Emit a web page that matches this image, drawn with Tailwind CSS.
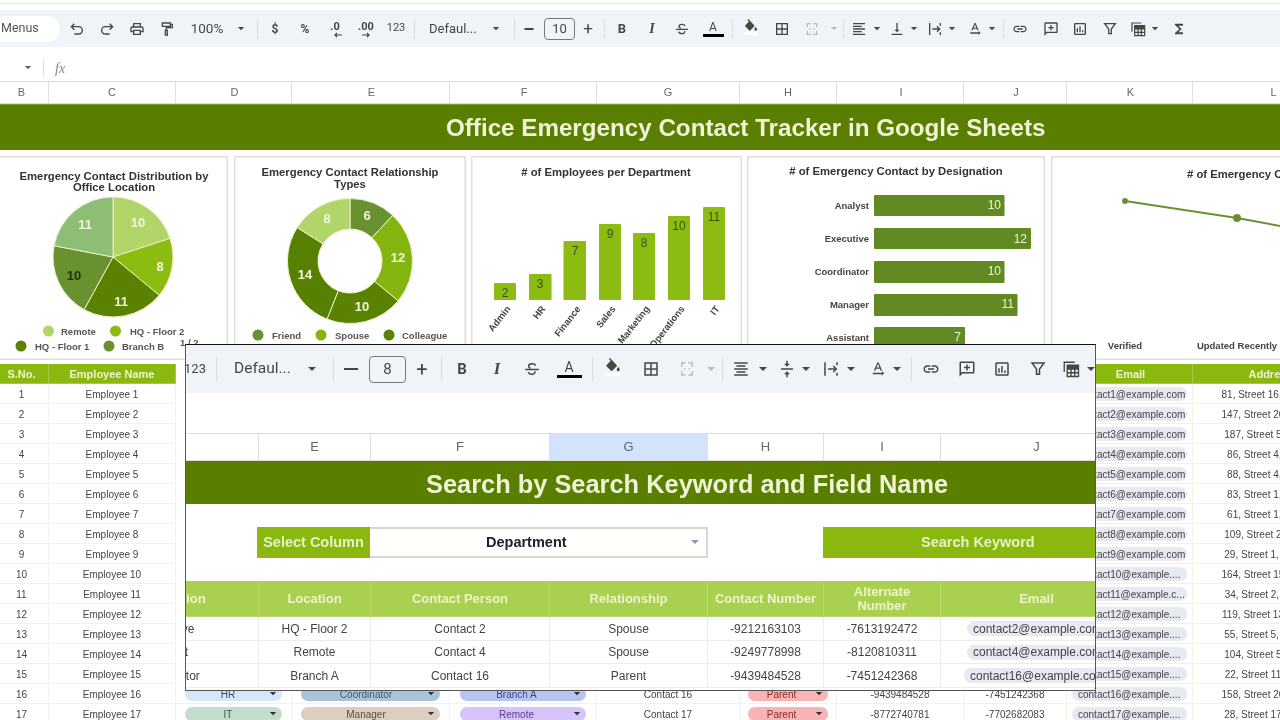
<!doctype html>
<html><head><meta charset="utf-8"><script src="https://cdn.jsdelivr.net/npm/@tailwindcss/browser@4"></script></head>
<body class="bg-white">
<svg class="hidden">
<symbol id="undo" viewBox="0 0 24 24"><path d="M8 4 3.5 8.5 8 13M4 8.5h10.5a5.5 5.5 0 0 1 0 11H8" fill="none" stroke="currentColor" stroke-width="2"/></symbol>
<symbol id="redo" viewBox="0 0 24 24"><path d="M16 4l4.500 4.500L16 13M20 8.500H9.500a5.500 5.500 0 0 0 0 11H16" fill="none" stroke="currentColor" stroke-width="2"/></symbol>
<symbol id="print" viewBox="0 0 24 24"><path fill="currentColor" d="M19 8h-1V3H6v5H5c-1.660 0-3 1.340-3 3v6h4v4h12v-4h4v-6c0-1.660-1.340-3-3-3zM8 5h8v3H8V5zm8 12v2H8v-4h8v2zm2-2v-2H6v2H4v-4c0-.55.45-1 1-1h14c.55 0 1 .45 1 1v4h-2z"/></symbol>
<symbol id="paint" viewBox="0 0 24 24"><path d="M5 3h12v5H5zM17 5h3v5H11v4M9.500 14h3v7h-3z" fill="none" stroke="currentColor" stroke-width="2"/></symbol>
<symbol id="strike" viewBox="0 0 24 24"><path d="M16.500 7.500C16 5.500 14 5 12 5c-2.500 0-4.500 1-4.500 3 0 1.500 1 2.500 2.500 3M3 12.500h18M16 15c.5 2.500-1.500 4-4 4-2.500 0-4.500-1-4.800-3" fill="none" stroke="currentColor" stroke-width="2"/></symbol>
<symbol id="fill" viewBox="0 0 24 24"><path fill="currentColor" d="M8 0 6.600 1.400l2.400 2.400-5.400 5.400c-.6.6-.6 1.500 0 2.100l5.500 5.500c.6.6 1.500.6 2.100 0l5.500-5.500c.6-.6.6-1.500 0-2.100zM19 12s-2 2.200-2 3.500c0 1.100.9 2 2 2s2-.9 2-2c0-1.300-2-3.500-2-3.500z"/><rect x="1" y="20" width="22" height="4" fill="#fff"/></symbol>
<symbol id="borders" viewBox="0 0 24 24"><path fill="currentColor" d="M3 3v18h18V3H3zm8 16H5v-6h6v6zm0-8H5V5h6v6zm8 8h-6v-6h6v6zm0-8h-6V5h6v6z"/></symbol>
<symbol id="merge" viewBox="0 0 24 24"><path d="M5 9V4h5M14 4h5v5M19 15v5h-5M10 20H5v-5M8 12h2M14 12h2" fill="none" stroke="#b9bdc2" stroke-width="2"/></symbol>
<symbol id="alignl" viewBox="0 0 24 24"><path fill="currentColor" d="M3 3h18v2H3zM3 7h13v2H3zM3 11h18v2H3zM3 15h13v2H3zM3 19h18v2H3z"/></symbol>
<symbol id="alignc" viewBox="0 0 24 24"><path fill="currentColor" d="M3 3h18v2H3zM6 7h12v2H6zM3 11h18v2H3zM6 15h12v2H6zM3 19h18v2H3z"/></symbol>
<symbol id="vbottom" viewBox="0 0 24 24"><path fill="currentColor" d="M16 13h-3V3h-2v10H8l4 4 4-4zM4 19v2h16v-2H4z"/></symbol>
<symbol id="vmid" viewBox="0 0 24 24"><path fill="currentColor" d="M8 19h3v4h2v-4h3l-4-4-4 4zm8-14h-3V1h-2v4H8l4 4 4-4zM4 11v2h16v-2H4z"/></symbol>
<symbol id="wrap" viewBox="0 0 24 24"><path d="M4 3v18M20 3v4M20 17v4M8 12h11M15 8l4 4-4 4" fill="none" stroke="currentColor" stroke-width="2"/></symbol>
<symbol id="rotate" viewBox="0 0 24 24"><path fill="currentColor" d="M12.750 3h-1.500L6.500 14h2.100l.9-2.200h5l.9 2.200h2.100L12.750 3zm-2.620 7L12 4.980 13.870 10h-3.740zm10.370 8-3-3v2H5v2h12v2l3-3z"/></symbol>
<symbol id="link" viewBox="0 0 24 24"><path fill="currentColor" d="M3.900 12c0-1.710 1.390-3.100 3.100-3.100h4V7H7c-2.760 0-5 2.240-5 5s2.240 5 5 5h4v-1.900H7c-1.710 0-3.100-1.390-3.100-3.100zM8 13h8v-2H8v2zm9-6h-4v1.900h4c1.710 0 3.100 1.390 3.100 3.100s-1.390 3.100-3.100 3.100h-4V17h4c2.760 0 5-2.240 5-5s-2.240-5-5-5z"/></symbol>
<symbol id="comment" viewBox="0 0 24 24"><path fill="currentColor" d="M20 2H4c-1.100 0-2 .9-2 2v18l4-4h14c1.100 0 2-.9 2-2V4c0-1.100-.9-2-2-2zm0 14H5.170L4 17.170V4h16v12zM13 6h-2v3H8v2h3v3h2v-3h3V9h-3z"/></symbol>
<symbol id="chart" viewBox="0 0 24 24"><path fill="currentColor" d="M19 3H5c-1.100 0-2 .9-2 2v14c0 1.100.9 2 2 2h14c1.100 0 2-.9 2-2V5c0-1.100-.9-2-2-2zm0 16H5V5h14v14zM7 11h2v6H7zM11 8h2v9h-2zM15 14h2v3h-2z"/></symbol>
<symbol id="filter" viewBox="0 0 24 24"><path d="M4 4h16l-6 8v7h-4v-7z" fill="none" stroke="currentColor" stroke-width="2"/></symbol>
<symbol id="calc" viewBox="0 0 24 24"><path d="M3 16V3h14" fill="none" stroke="currentColor" stroke-width="1.800"/><path d="M7 7h15v15H7zM7 12h15M7 17h15M12 12v10M17 12v10" fill="none" stroke="currentColor" stroke-width="1.800"/><path fill="currentColor" d="M7 7h15v5H7z"/></symbol>
<symbol id="sigma" viewBox="0 0 24 24"><path fill="currentColor" d="M18 4H6v2l6.500 6L6 18v2h12v-3h-7l5-5-5-5h7z"/></symbol>
<symbol id="drop" viewBox="-1 0 10 5"><path fill="currentColor" d="M0 0h8L4 4z"/></symbol>
</svg>

<div class="relative w-[1280px] h-[720px] overflow-hidden bg-white text-[#444] font-['Liberation_Sans',Arial,sans-serif] blur-[0.35px]">

<!-- top strip -->
<div class="h-[10px] bg-white"><div class="h-[3px]"></div><div class="h-[1px] bg-[#e6e6e6]"></div></div>

<!-- main toolbar -->
<div class="h-[37px] bg-[#f0f4f9] flex items-center text-[#444746] font-[Roboto,sans-serif] [&>*]:shrink-0">
  <div class="w-[60px] h-[26px] bg-white rounded-r-full flex items-center text-[12.500px] text-[#555] pl-[1px]">Menus</div>
  <svg class="ml-[9px] w-4 h-4"><use href="#undo"/></svg>
  <svg class="ml-[14px] w-4 h-4"><use href="#redo"/></svg>
  <svg class="ml-[14px] w-4 h-4"><use href="#print"/></svg>
  <svg class="ml-[14px] w-4 h-4"><use href="#paint"/></svg>
  <div class="ml-[12px] w-[40px] text-center text-[13.500px]">100%</div>
  <svg class="ml-[10px] w-[8px] h-[4px]"><use href="#drop"/></svg>
  <div class="ml-[12px] w-[1px] h-[20px] bg-[#d8dce2]"></div>
  <div class="ml-[9px] w-4 text-center text-[12px] font-bold">$</div>
  <div class="ml-[14px] w-4 text-center text-[12px] font-bold">%</div>
  <div class="ml-[14px] w-4 relative text-center text-[11px] font-bold leading-[12px] -mt-[4px]">.0<svg class="absolute left-[6px] top-[11px] w-[9px] h-[6px]" viewBox="0 0 9 6"><path d="M9 3H2M4 1 2 3l2 2" fill="none" stroke="currentColor" stroke-width="1.200"/></svg></div>
  <div class="ml-[15px] w-4 relative text-center text-[11px] font-bold leading-[12px] -mt-[4px]">.00<svg class="absolute left-[4px] top-[11px] w-[9px] h-[6px]" viewBox="0 0 9 6"><path d="M0 3h7M5 1l2 2-2 2" fill="none" stroke="currentColor" stroke-width="1.200"/></svg></div>
  <div class="ml-[12px] w-[20px] text-center text-[11px]">123</div>
  <div class="ml-[8px] w-[1px] h-[20px] bg-[#d8dce2]"></div>
  <div class="ml-[14px] w-[52px] text-[13px] whitespace-nowrap">Defaul...</div>
  <svg class="ml-[11px] w-[8px] h-[4px]"><use href="#drop"/></svg>
  <div class="ml-[14px] w-[1px] h-[20px] bg-[#d8dce2]"></div>
  <div class="ml-[8px] w-[12px] h-[2px] bg-[#444746] scale-x-75"></div>
  <div class="ml-[9px] w-[31px] h-[22px] border border-[#777] rounded-[4px] flex items-center justify-center text-[13px]">10</div>
  <div class="ml-[7px] w-[12px] text-center text-[17px] leading-none">+</div>
  <div class="ml-[10px] w-[1px] h-[20px] bg-[#d8dce2]"></div>
  <div class="ml-[9px] w-4 text-center text-[13px] font-bold">B</div>
  <div class="ml-[14px] w-4 text-center text-[14px] font-bold italic font-['Liberation_Serif',serif]">I</div>
  <svg class="ml-[14px] w-4 h-4"><use href="#strike"/></svg>
  <div class="ml-[15px] w-4 flex flex-col items-center"><span class="text-[12px] leading-[13px]">A</span><span class="w-[21px] h-[3px] bg-black shrink-0"></span></div>
  <div class="ml-[11px] w-[1px] h-[20px] bg-[#d8dce2]"></div>
  <svg class="ml-[10px] w-4 h-4 -mt-[3px]"><use href="#fill"/></svg>
  <svg class="ml-[15px] w-4 h-4"><use href="#borders"/></svg>
  <svg class="ml-[14px] w-4 h-4"><use href="#merge"/></svg>
  <svg class="ml-[10px] w-[8px] h-[4px] text-[#b9bdc2]"><use href="#drop"/></svg>
  <div class="ml-[5px] w-[1px] h-[20px] bg-[#d8dce2]"></div>
  <svg class="ml-[7px] w-4 h-4"><use href="#alignl"/></svg>
  <svg class="ml-[6px] w-[8px] h-[4px]"><use href="#drop"/></svg>
  <svg class="ml-[8px] w-4 h-4"><use href="#vbottom"/></svg>
  <svg class="ml-[5px] w-[8px] h-[4px]"><use href="#drop"/></svg>
  <svg class="ml-[9px] w-4 h-4"><use href="#wrap"/></svg>
  <svg class="ml-[5px] w-[8px] h-[4px]"><use href="#drop"/></svg>
  <svg class="ml-[11px] w-4 h-4"><use href="#rotate"/></svg>
  <svg class="ml-[5px] w-[8px] h-[4px]"><use href="#drop"/></svg>
  <div class="ml-[7px] w-[1px] h-[20px] bg-[#d8dce2]"></div>
  <svg class="ml-[8px] w-4 h-4"><use href="#link"/></svg>
  <svg class="ml-[15px] w-4 h-4"><use href="#comment"/></svg>
  <svg class="ml-[13px] w-4 h-4"><use href="#chart"/></svg>
  <svg class="ml-[14px] w-4 h-4"><use href="#filter"/></svg>
  <svg class="ml-[12px] w-4 h-4"><use href="#calc"/></svg>
  <svg class="ml-[5px] w-[8px] h-[4px]"><use href="#drop"/></svg>
  <svg class="ml-[12px] w-4 h-4"><use href="#sigma"/></svg>
</div>

<!-- formula bar -->
<div class="h-[34px] bg-white flex items-center pt-[8px] text-[#666]">
  <svg class="ml-[24px] w-[8px] h-[4px]"><use href="#drop"/></svg>
  <div class="ml-[11px] w-[1px] h-[18px] bg-[#ddd]"></div>
  <div class="ml-[11px] text-[14px] italic font-['Liberation_Serif',serif] text-[#888]">fx</div>
</div>

<!-- column letters -->
<div class="ml-[-5px] w-[1379px] h-[23px] border-t border-b border-[#dcdcdc] grid grid-cols-[54px_127px_116px_158px_147px_143px_97px_127px_103px_126px_156px] text-[11px] text-[#666] [&>*]:flex [&>*]:items-center [&>*]:justify-center [&>*]:border-r [&>*]:border-[#dfdfdf]">
  <div>B</div><div>C</div><div class="pl-[2px]">D</div><div class="pl-[2px]">E</div><div class="pl-[2px]">F</div><div>G</div><div>H</div><div class="pl-[2px]">I</div><div class="pl-[2px]">J</div><div class="pl-[2px]">K</div><div class="pl-[6px]">L</div>
</div>

<!-- title -->
<div class="h-[46px] bg-[#5a7f00] border-t border-[#7d9a33] flex items-center pl-[446px] pt-[2px] text-[24.200px] font-bold text-[#eef5d6] whitespace-nowrap">Office Emergency Contact Tracker in Google Sheets</div>

<!-- charts -->
<div class="mt-[6px] h-[204px] flex items-start">
  <div class="ml-[-2px] w-[230px] h-[204px] shrink-0 shadow-[inset_0_0_0_1.500px_#dde0dd]">
    <svg width="230" height="204" viewBox="-2 156 230 204" font-family="Liberation Sans, Arial, sans-serif">
      <g font-size="11.300" font-weight="bold" fill="#333" text-anchor="middle"><text x="114" y="180">Emergency Contact Distribution by</text><text x="114" y="191">Office Location</text></g>
      <g stroke="#e8f2c4" stroke-width="1">
        <path fill="#b2d56a" d="M113 257V197A60 60 0 0 1 170.060 238.460Z"/>
        <path fill="#8cbb12" d="M113 257L170.060 238.460A60 60 0 0 1 159.230 295.240Z"/>
        <path fill="#5a8200" d="M113 257L159.230 295.240A60 60 0 0 1 84.090 309.580Z"/>
        <path fill="#6a9130" d="M113 257L84.090 309.580A60 60 0 0 1 54.060 245.760Z"/>
        <path fill="#8ebe75" d="M113 257L54.060 245.760A60 60 0 0 1 113 197Z"/>
      </g>
      <g font-size="13" font-weight="bold" text-anchor="middle" fill="#f1f7dc">
        <text x="138" y="227">10</text><text x="160" y="271">8</text><text x="121" y="306">11</text><text x="74" y="280" fill="#1f3300">10</text><text x="85" y="229">11</text>
      </g>
      <g font-size="9.500" font-weight="bold" fill="#555">
        <circle cx="48.500" cy="331" r="5.500" fill="#b2d56a"/><text x="61" y="334.500">Remote</text>
        <circle cx="115.500" cy="331" r="5.500" fill="#8cbb12"/><text x="130" y="334.500">HQ - Floor 2</text>
        <circle cx="21" cy="346" r="5.500" fill="#5a8200"/><text x="35" y="349.500">HQ - Floor 1</text>
        <circle cx="109" cy="346" r="5.500" fill="#6a9130"/><text x="122" y="349.500">Branch B</text>
        <text x="180" y="346">1 / 2</text>
      </g>
    </svg>
  </div>
  <div class="ml-[6px] w-[232px] h-[204px] shrink-0 shadow-[inset_0_0_0_1.500px_#dde0dd]">
    <svg width="232" height="204" viewBox="234 156 232 204" font-family="Liberation Sans, Arial, sans-serif">
      <g font-size="11.300" font-weight="bold" fill="#333" text-anchor="middle"><text x="350" y="176">Emergency Contact Relationship</text><text x="350" y="188">Types</text></g>
      <g stroke="#e8f2c4" stroke-width="1">
        <path fill="#6a9130" d="M350 198.500A62.500 62.500 0 0 1 392.780 215.440L371.900 237.670A32 32 0 0 0 350 229Z"/>
        <path fill="#84b40e" d="M392.780 215.440A62.500 62.500 0 0 1 398.160 300.840L374.660 281.400A32 32 0 0 0 371.900 237.670Z"/>
        <path fill="#5a8200" d="M398.160 300.840A62.500 62.500 0 0 1 326.990 319.110L338.220 290.750A32 32 0 0 0 374.660 281.400Z"/>
        <path fill="#578000" d="M326.990 319.110A62.500 62.500 0 0 1 297.230 227.510L322.980 243.850A32 32 0 0 0 338.220 290.750Z"/>
        <path fill="#b2d56a" d="M297.230 227.510A62.500 62.500 0 0 1 350 198.500L350 229A32 32 0 0 0 322.980 243.850Z"/>
      </g>
      <g font-size="13" font-weight="bold" text-anchor="middle" fill="#f1f7dc">
        <text x="367" y="220">6</text><text x="398" y="262">12</text><text x="362" y="311">10</text><text x="305" y="279">14</text><text x="327" y="223">8</text>
      </g>
      <g font-size="9.500" font-weight="bold" fill="#555">
        <circle cx="258" cy="335" r="5.500" fill="#6a9130"/><text x="272" y="338.500">Friend</text>
        <circle cx="321" cy="335" r="5.500" fill="#84b40e"/><text x="335" y="338.500">Spouse</text>
        <circle cx="389" cy="335" r="5.500" fill="#5a8200"/><text x="402" y="338.500">Colleague</text>
      </g>
    </svg>
  </div>
  <div class="ml-[5px] w-[271px] h-[204px] shrink-0 shadow-[inset_0_0_0_1.500px_#dde0dd]">
    <svg width="271" height="204" viewBox="471 156 271 204" font-family="Liberation Sans, Arial, sans-serif">
      <text x="606" y="176" font-size="11.300" font-weight="bold" fill="#333" text-anchor="middle"># of Employees per Department</text>
      <g fill="#8cbb12">
        <rect x="494" y="283" width="22" height="17" rx="1"/><rect x="529" y="274" width="22.500" height="26" rx="1"/><rect x="563.500" y="241" width="22.500" height="59" rx="1"/><rect x="599" y="224" width="22" height="76" rx="1"/><rect x="633" y="233" width="22" height="67" rx="1"/><rect x="668" y="216" width="22" height="84" rx="1"/><rect x="703" y="207" width="22" height="93" rx="1"/>
      </g>
      <g font-size="12" fill="#37520a" text-anchor="middle">
        <text x="505" y="297">2</text><text x="540" y="288">3</text><text x="575" y="255">7</text><text x="610" y="238">9</text><text x="644" y="247">8</text><text x="679" y="230">10</text><text x="714" y="221">11</text>
      </g>
      <g font-size="9.500" font-weight="bold" fill="#444" text-anchor="end">
        <text transform="translate(511 309) rotate(-52)">Admin</text><text transform="translate(546 309) rotate(-52)">HR</text><text transform="translate(581 309) rotate(-52)">Finance</text><text transform="translate(616 309) rotate(-52)">Sales</text><text transform="translate(650 309) rotate(-52)">Marketing</text><text transform="translate(685 309) rotate(-52)">Operations</text><text transform="translate(720 309) rotate(-52)">IT</text>
      </g>
    </svg>
  </div>
  <div class="ml-[5px] w-[298px] h-[204px] shrink-0 shadow-[inset_0_0_0_1.500px_#dde0dd]">
    <svg width="298" height="204" viewBox="747 156 298 204" font-family="Liberation Sans, Arial, sans-serif">
      <text x="896" y="175" font-size="11.300" font-weight="bold" fill="#333" text-anchor="middle"># of Emergency Contact by Designation</text>
      <g fill="#618a22">
        <rect x="874" y="195" width="130.500" height="21" rx="1"/><rect x="874" y="228" width="157" height="21" rx="1"/><rect x="874" y="261" width="130.500" height="22" rx="1"/><rect x="874" y="294" width="143.500" height="22" rx="1"/><rect x="874" y="327" width="91" height="21" rx="1"/>
      </g>
      <g font-size="12" fill="#eef5d6" text-anchor="end">
        <text x="1001" y="209">10</text><text x="1027" y="243">12</text><text x="1001" y="275">10</text><text x="1014" y="308">11</text><text x="961" y="341">7</text>
      </g>
      <g font-size="9.500" font-weight="bold" fill="#444" text-anchor="end">
        <text x="869" y="209">Analyst</text><text x="869" y="242">Executive</text><text x="869" y="275">Coordinator</text><text x="869" y="308">Manager</text><text x="869" y="341">Assistant</text>
      </g>
    </svg>
  </div>
  <div class="ml-[6px] w-[240px] h-[204px] shrink-0 shadow-[inset_0_0_0_1.500px_#dde0dd]">
    <svg width="240" height="204" viewBox="1051 156 240 204" font-family="Liberation Sans, Arial, sans-serif">
      <text x="1187" y="178" font-size="11.300" font-weight="bold" fill="#333"># of Emergency Contact Status</text>
      <path d="M1125 201 1237 218 1291 228" fill="none" stroke="#6a9130" stroke-width="2"/>
      <circle cx="1125" cy="201" r="3" fill="#6a9130"/><circle cx="1237" cy="218" r="4" fill="#6a9130"/>
      <g font-size="9.500" font-weight="bold" fill="#444" text-anchor="middle"><text x="1125" y="349">Verified</text><text x="1237" y="349">Updated Recently</text></g>
    </svg>
  </div>
</div>

<!-- data table -->
<div class="mt-[4px] ml-[-5px] w-[1379px] grid grid-cols-[54px_127px_116px_158px_147px_143px_97px_127px_103px_126px_156px] auto-rows-[20px] text-[10px] text-[#444] whitespace-nowrap [&>*]:flex [&>*]:items-center [&>*]:justify-center [&>*]:pt-[1px] [&>*]:border-b [&>*]:border-r [&>*]:border-[#f1f3e3]">
  <div class="col-start-1 bg-[#8ab80f] !border-[#a6c94a] text-[#eef5d0] text-[11px] font-bold">S.No.</div><div class="bg-[#8ab80f] !border-[#a6c94a] text-[#eef5d0] text-[11px] font-bold">Employee Name</div><div class="col-start-10 pl-[2px] bg-[#8ab80f] !border-[#a6c94a] text-[#eef5d0] text-[11px] font-bold">Email</div><div class="bg-[#8ab80f] !border-[#a6c94a] text-[#eef5d0] text-[11px] font-bold">Address</div>
  <div class="col-start-1">1</div><div>Employee 1</div><div class="col-start-10 px-[5px]"><span class="w-full h-[14px] rounded-full bg-[#e8eaf2] flex items-center pl-[6px]">contact1@example.com</span></div><div class="pr-[4px]">81, Street 16, City 12</div>
  <div class="col-start-1">2</div><div>Employee 2</div><div class="col-start-10 px-[5px]"><span class="w-full h-[14px] rounded-full bg-[#e8eaf2] flex items-center pl-[6px]">contact2@example.com</span></div><div class="pr-[4px]">147, Street 20, City 5</div>
  <div class="col-start-1">3</div><div>Employee 3</div><div class="col-start-10 px-[5px]"><span class="w-full h-[14px] rounded-full bg-[#e8eaf2] flex items-center pl-[6px]">contact3@example.com</span></div><div class="pr-[4px]">187, Street 5, City 8</div>
  <div class="col-start-1">4</div><div>Employee 4</div><div class="col-start-10 px-[5px]"><span class="w-full h-[14px] rounded-full bg-[#e8eaf2] flex items-center pl-[6px]">contact4@example.com</span></div><div class="pr-[4px]">86, Street 4, City 3</div>
  <div class="col-start-1">5</div><div>Employee 5</div><div class="col-start-10 px-[5px]"><span class="w-full h-[14px] rounded-full bg-[#e8eaf2] flex items-center pl-[6px]">contact5@example.com</span></div><div class="pr-[4px]">88, Street 4, City 9</div>
  <div class="col-start-1">6</div><div>Employee 6</div><div class="col-start-10 px-[5px]"><span class="w-full h-[14px] rounded-full bg-[#e8eaf2] flex items-center pl-[6px]">contact6@example.com</span></div><div class="pr-[4px]">83, Street 1, City 7</div>
  <div class="col-start-1">7</div><div>Employee 7</div><div class="col-start-10 px-[5px]"><span class="w-full h-[14px] rounded-full bg-[#e8eaf2] flex items-center pl-[6px]">contact7@example.com</span></div><div class="pr-[4px]">61, Street 1, City 4</div>
  <div class="col-start-1">8</div><div>Employee 8</div><div class="col-start-10 px-[5px]"><span class="w-full h-[14px] rounded-full bg-[#e8eaf2] flex items-center pl-[6px]">contact8@example.com</span></div><div class="pr-[4px]">109, Street 2, City 6</div>
  <div class="col-start-1">9</div><div>Employee 9</div><div class="col-start-10 px-[5px]"><span class="w-full h-[14px] rounded-full bg-[#e8eaf2] flex items-center pl-[6px]">contact9@example.com</span></div><div class="pr-[4px]">29, Street 1, City 10</div>
  <div class="col-start-1">10</div><div>Employee 10</div><div class="col-start-10 px-[5px]"><span class="w-full h-[14px] rounded-full bg-[#e8eaf2] flex items-center pl-[6px]">contact10@example....</span></div><div class="pr-[4px]">164, Street 15, City 2</div>
  <div class="col-start-1">11</div><div>Employee 11</div><div class="col-start-10 px-[5px]"><span class="w-full h-[14px] rounded-full bg-[#e8eaf2] flex items-center pl-[6px]">contact11@example.c...</span></div><div class="pr-[4px]">34, Street 2, City 11</div>
  <div class="col-start-1">12</div><div>Employee 12</div><div class="col-start-10 px-[5px]"><span class="w-full h-[14px] rounded-full bg-[#e8eaf2] flex items-center pl-[6px]">contact12@example....</span></div><div class="pr-[4px]">119, Street 13, City 1</div>
  <div class="col-start-1">13</div><div>Employee 13</div><div class="col-start-10 px-[5px]"><span class="w-full h-[14px] rounded-full bg-[#e8eaf2] flex items-center pl-[6px]">contact13@example....</span></div><div class="pr-[4px]">55, Street 5, City 14</div>
  <div class="col-start-1">14</div><div>Employee 14</div><div class="col-start-10 px-[5px]"><span class="w-full h-[14px] rounded-full bg-[#e8eaf2] flex items-center pl-[6px]">contact14@example....</span></div><div class="pr-[4px]">104, Street 5, City 3</div>
  <div class="col-start-1">15</div><div>Employee 15</div><div class="col-start-10 px-[5px]"><span class="w-full h-[14px] rounded-full bg-[#e8eaf2] flex items-center pl-[6px]">contact15@example....</span></div><div class="pr-[4px]">22, Street 11, City 6</div>
  <div class="col-start-1">16</div><div>Employee 16</div>
  <div class="px-[9px]"><span class="w-full h-[14px] rounded-full bg-[#d6e6f8] text-[#3c4a5a] flex items-center"><span class="flex-1 text-center pl-[2px]">HR</span><svg class="w-[8px] h-[4px] mr-[5px] text-[#333]"><use href="#drop"/></svg></span></div>
  <div class="px-[9px]"><span class="w-full h-[14px] rounded-full bg-[#a9c4d9] text-[#3d5a73] flex items-center"><span class="flex-1 text-center pl-[4px]">Coordinator</span><svg class="w-[8px] h-[4px] mr-[5px] text-[#333]"><use href="#drop"/></svg></span></div>
  <div class="px-[10px]"><span class="w-full h-[14px] rounded-full bg-[#b6c4f2] text-[#3a4a8a] flex items-center"><span class="flex-1 text-center">Branch A</span><svg class="w-[8px] h-[4px] mr-[5px] text-[#333]"><use href="#drop"/></svg></span></div>
  <div>Contact 16</div>
  <div class="px-[8px]"><span class="w-full h-[14px] rounded-full bg-[#f8b4b4] text-[#8a2a2a] flex items-center"><span class="flex-1 text-center">Parent</span><svg class="w-[8px] h-[4px] mr-[5px] text-[#333]"><use href="#drop"/></svg></span></div>
  <div>-9439484528</div><div>-7451242368</div>
  <div class="px-[5px]"><span class="w-full h-[14px] rounded-full bg-[#e8eaf2] flex items-center pl-[6px]">contact16@example....</span></div><div class="pr-[4px]">158, Street 20, City 9</div>
  <div class="col-start-1">17</div><div>Employee 17</div>
  <div class="px-[9px]"><span class="w-full h-[14px] rounded-full bg-[#c4dccb] text-[#3c5a48] flex items-center"><span class="flex-1 text-center pl-[2px]">IT</span><svg class="w-[8px] h-[4px] mr-[5px] text-[#333]"><use href="#drop"/></svg></span></div>
  <div class="px-[9px]"><span class="w-full h-[14px] rounded-full bg-[#dccfbf] text-[#5c4c3c] flex items-center"><span class="flex-1 text-center pl-[4px]">Manager</span><svg class="w-[8px] h-[4px] mr-[5px] text-[#333]"><use href="#drop"/></svg></span></div>
  <div class="px-[10px]"><span class="w-full h-[14px] rounded-full bg-[#d4c4f8] text-[#5a3e9a] flex items-center"><span class="flex-1 text-center">Remote</span><svg class="w-[8px] h-[4px] mr-[5px] text-[#333]"><use href="#drop"/></svg></span></div>
  <div>Contact 17</div>
  <div class="px-[8px]"><span class="w-full h-[14px] rounded-full bg-[#f8b4b4] text-[#8a2a2a] flex items-center"><span class="flex-1 text-center">Parent</span><svg class="w-[8px] h-[4px] mr-[5px] text-[#333]"><use href="#drop"/></svg></span></div>
  <div>-8772740781</div><div>-7702682083</div>
  <div class="px-[5px]"><span class="w-full h-[14px] rounded-full bg-[#e8eaf2] flex items-center pl-[6px]">contact17@example....</span></div><div class="pr-[4px]">28, Street 17, City 8</div>
</div>

<!-- overlay window -->
<div class="absolute left-[185px] top-[344px] w-[911px] h-[347px] bg-white border border-[#555] border-t-[#111] overflow-hidden">
  <div class="h-[48px] bg-[#f0f4f9] flex items-center text-[#444746] font-[Roboto,sans-serif] [&>*]:shrink-0">
    <div class="ml-[-4px] w-[26px] text-center text-[13px]">123</div>
    <div class="ml-[8px] w-[1px] h-[24px] bg-[#d8dce2]"></div>
    <div class="ml-[17px] w-[60px] text-[15.500px] whitespace-nowrap">Defaul...</div>
    <svg class="ml-[13px] w-[10px] h-[5px]"><use href="#drop"/></svg>
    <div class="ml-[16px] w-[1px] h-[24px] bg-[#d8dce2]"></div>
    <div class="ml-[10px] w-[14px] h-[2px] bg-[#444746]"></div>
    <div class="ml-[11px] w-[37px] h-[27px] border border-[#777] rounded-[4px] flex items-center justify-center text-[15px]">8</div>
    <div class="ml-[9px] w-[14px] text-center text-[20px] leading-none">+</div>
    <div class="ml-[12px] w-[1px] h-[24px] bg-[#d8dce2]"></div>
    <div class="ml-[11px] w-[18px] text-center text-[15px] font-bold">B</div>
    <div class="ml-[17px] w-[18px] text-center text-[17px] font-bold italic font-['Liberation_Serif',serif]">I</div>
    <svg class="ml-[17px] w-[18px] h-[18px]"><use href="#strike"/></svg>
    <div class="ml-[19px] w-[18px] flex flex-col items-center"><span class="text-[14px] leading-[15px]">A</span><span class="w-[25px] h-[3px] bg-black shrink-0"></span></div>
    <div class="ml-[14px] w-[1px] h-[24px] bg-[#d8dce2]"></div>
    <svg class="ml-[11px] w-[18px] h-[18px] -mt-[4px]"><use href="#fill"/></svg>
    <svg class="ml-[20px] w-[18px] h-[18px]"><use href="#borders"/></svg>
    <svg class="ml-[18px] w-[18px] h-[18px]"><use href="#merge"/></svg>
    <svg class="ml-[10px] w-[10px] h-[5px] text-[#b9bdc2]"><use href="#drop"/></svg>
    <div class="ml-[6px] w-[1px] h-[24px] bg-[#d8dce2]"></div>
    <svg class="ml-[9px] w-[18px] h-[18px]"><use href="#alignc"/></svg>
    <svg class="ml-[8px] w-[10px] h-[5px]"><use href="#drop"/></svg>
    <svg class="ml-[10px] w-[18px] h-[18px]"><use href="#vmid"/></svg>
    <svg class="ml-[5px] w-[10px] h-[5px]"><use href="#drop"/></svg>
    <svg class="ml-[11px] w-[18px] h-[18px]"><use href="#wrap"/></svg>
    <svg class="ml-[6px] w-[10px] h-[5px]"><use href="#drop"/></svg>
    <svg class="ml-[13px] w-[18px] h-[18px]"><use href="#rotate"/></svg>
    <svg class="ml-[5px] w-[10px] h-[5px]"><use href="#drop"/></svg>
    <div class="ml-[9px] w-[1px] h-[24px] bg-[#d8dce2]"></div>
    <svg class="ml-[10px] w-[18px] h-[18px]"><use href="#link"/></svg>
    <svg class="ml-[18px] w-[18px] h-[18px]"><use href="#comment"/></svg>
    <svg class="ml-[17px] w-[18px] h-[18px]"><use href="#chart"/></svg>
    <svg class="ml-[18px] w-[18px] h-[18px]"><use href="#filter"/></svg>
    <svg class="ml-[15px] w-[18px] h-[18px]"><use href="#calc"/></svg>
    <svg class="ml-[6px] w-[10px] h-[5px]"><use href="#drop"/></svg>
  </div>
  <div class="h-[40px]"></div>
  <div class="ml-[-99px] h-[28px] border-t border-b border-[#dcdcdc] grid grid-cols-[172px_112px_179px_158px_116px_117px_192px] text-[13px] text-[#666] [&>*]:flex [&>*]:items-center [&>*]:justify-center [&>*]:border-r [&>*]:border-[#dfdfdf]">
    <div></div><div>E</div><div>F</div><div class="bg-[#d3e3fd]">G</div><div>H</div><div>I</div><div>J</div>
  </div>
  <div class="h-[43px] bg-[#5a7f00] flex items-center pl-[240px] pt-[3px] text-[25.400px] font-bold text-[#eef5d6] whitespace-nowrap">Search by Search Keyword and Field Name</div>
  <div class="mt-[23px] h-[31px] flex items-stretch text-[14.500px] font-bold [&>*]:shrink-0">
    <div class="ml-[71px] w-[113px] bg-[#8ab80f] text-[#e8f2c8] flex items-center justify-center whitespace-nowrap">Select Column</div>
    <div class="w-[338px] border-2 border-l-0 border-[#d5d9c8] text-[#222] flex items-center pl-[116px]"><span class="w-[100px]">Department</span><svg class="ml-[104px] w-[10px] h-[5px] text-[#999]"><use href="#drop"/></svg></div>
    <div class="ml-[115px] w-[290px] bg-[#8ab80f] text-[#e8f2c8] flex items-center pl-[98px]">Search Keyword</div>
  </div>
  <div class="ml-[-99px] mt-[23px] w-[1046px] grid grid-cols-[172px_112px_179px_158px_116px_117px_192px] grid-rows-[36px_24px_23px_24px] text-[12px] text-[#444] whitespace-nowrap [&>*]:flex [&>*]:items-center [&>*]:justify-center [&>*]:border-r [&>*]:border-b [&>*]:border-[#ececec] [&>*]:text-center">
    <div class="pr-[8px] bg-[#a9d14f] !border-[#b7d96a] text-[#edf5cc] text-[13px] font-bold">Designation</div><div class="bg-[#a9d14f] !border-[#b7d96a] text-[#edf5cc] text-[13px] font-bold">Location</div><div class="bg-[#a9d14f] !border-[#b7d96a] text-[#edf5cc] text-[13px] font-bold">Contact Person</div><div class="bg-[#a9d14f] !border-[#b7d96a] text-[#edf5cc] text-[13px] font-bold">Relationship</div><div class="bg-[#a9d14f] !border-[#b7d96a] text-[#edf5cc] text-[13px] font-bold">Contact Number</div><div class="bg-[#a9d14f] !border-[#b7d96a] text-[#edf5cc] text-[13px] font-bold leading-[14px] whitespace-normal px-[20px]">Alternate Number</div><div class="bg-[#a9d14f] !border-[#b7d96a] text-[#edf5cc] text-[13px] font-bold">Email</div>
    <div class="pr-[8px]">Executive</div><div>HQ - Floor 2</div><div>Contact 2</div><div>Spouse</div><div>-9212163103</div><div>-7613192472</div><div class="!justify-start pl-[26px]"><span class="h-[15px] flex items-center rounded-full bg-[#e8eaf2] pl-[6px] pr-[30px]">contact2@example.com</span></div>
    <div class="pr-[8px]">Analyst</div><div>Remote</div><div>Contact 4</div><div>Spouse</div><div>-9249778998</div><div>-8120810311</div><div class="!justify-start pl-[26px]"><span class="h-[15px] flex items-center rounded-full bg-[#e8eaf2] pl-[6px] pr-[30px]">contact4@example.com</span></div>
    <div class="pr-[8px]">Coordinator</div><div>Branch A</div><div>Contact 16</div><div>Parent</div><div>-9439484528</div><div>-7451242368</div><div class="!justify-start pl-[23px]"><span class="h-[15px] flex items-center rounded-full bg-[#e8eaf2] pl-[6px] pr-[30px]">contact16@example.com</span></div>
  </div>
</div>
</div>
</body></html>
